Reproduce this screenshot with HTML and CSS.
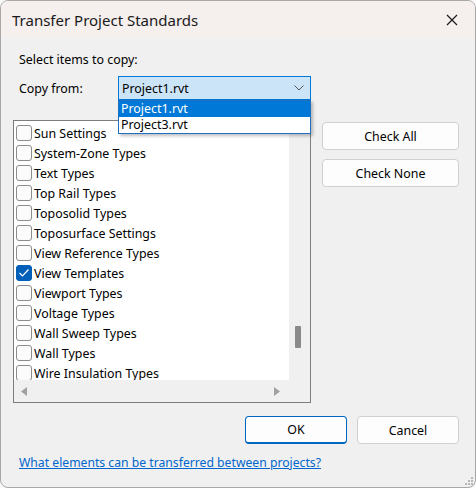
FILE: index.html
```html
<!DOCTYPE html>
<html>
<head>
    <title>Transfer Project Standards</title>
    <meta charset="utf-8" />
    <link rel="stylesheet" href="styles.css">
</head>
<body>
    <div class="window">
        <div class="titlebar">
            <span class="title">Transfer Project Standards</span>
            <svg class="close" width="12" height="12" viewBox="0 0 12 12">
                <path d="M1 1 L11 11 M11 1 L1 11" stroke="#1a1a1a" stroke-width="1.2" fill="none"/>
            </svg>
        </div>
        <div class="content">
            <div class="caption">Select items to copy:</div>
            <div class="copy-row">
                <span class="label">Copy from:</span>
                <div class="combo">
                    <span>Project1.rvt</span>
                    <svg width="10" height="6" viewBox="0 0 10 6">
                        <path d="M0.5 0.5 L5 5 L9.5 0.5" stroke="#555" stroke-width="1" fill="none"/>
                    </svg>
                    <div class="popup">
                        <div class="opt selected">Project1.rvt</div>
                        <div class="opt">Project3.rvt</div>
                    </div>
                </div>
            </div>
            <div class="middle">
                <div class="listbox">
                    <div class="items">
                        <div class="item"><span class="box"></span>Sun Settings</div>
                        <div class="item"><span class="box"></span>System-Zone Types</div>
                        <div class="item"><span class="box"></span>Text Types</div>
                        <div class="item"><span class="box"></span>Top Rail Types</div>
                        <div class="item"><span class="box"></span>Toposolid Types</div>
                        <div class="item"><span class="box"></span>Toposurface Settings</div>
                        <div class="item"><span class="box"></span>View Reference Types</div>
                        <div class="item"><span class="box checked"><svg width="12" height="10" viewBox="0 0 12 10"><path d="M1.5 5 L4.5 8 L10.5 1.5" stroke="#fff" stroke-width="1.2" fill="none"/></svg></span>View Templates</div>
                        <div class="item"><span class="box"></span>Viewport Types</div>
                        <div class="item"><span class="box"></span>Voltage Types</div>
                        <div class="item"><span class="box"></span>Wall Sweep Types</div>
                        <div class="item"><span class="box"></span>Wall Types</div>
                        <div class="item"><span class="box"></span>Wire Insulation Types</div>
                    </div>
                    <div class="vscroll"><div class="thumb"></div></div>
                    <div class="hscroll">
                        <svg width="6" height="9" viewBox="0 0 6 9"><path d="M6 0 L0 4.5 L6 9 Z" fill="#a0a0a0"/></svg>
                        <svg width="6" height="9" viewBox="0 0 6 9"><path d="M0 0 L6 4.5 L0 9 Z" fill="#a0a0a0"/></svg>
                    </div>
                    <div class="corner"></div>
                </div>
                <div class="side-buttons">
                    <button class="btn">Check All</button>
                    <button class="btn">Check None</button>
                </div>
            </div>
            <div class="actions">
                <button class="btn default">OK</button>
                <button class="btn">Cancel</button>
            </div>
            <a class="help" href="#">What elements can be transferred between projects?</a>
        </div>
        <svg class="grip" width="10" height="10" viewBox="0 0 10 10">
            <rect x="7" y="1" width="2" height="2" fill="#b8b8b8"/>
            <rect x="4" y="4" width="2" height="2" fill="#b8b8b8"/>
            <rect x="7" y="4" width="2" height="2" fill="#b8b8b8"/>
            <rect x="1" y="7" width="2" height="2" fill="#b8b8b8"/>
            <rect x="4" y="7" width="2" height="2" fill="#b8b8b8"/>
            <rect x="7" y="7" width="2" height="2" fill="#b8b8b8"/>
        </svg>
    </div>
</body>
</html>
```

FILE: styles.css
```css
html, body {
    margin: 0;
    background: #fafafa;
}

body {
    font-family: "Noto Sans", "Liberation Sans", sans-serif;
    font-size: 12.4px;
    color: #000;
}

.window {
    position: relative;
    box-sizing: border-box;
    width: 476px;
    height: 488px;
    border: 1px solid #a8a8a8;
    border-radius: 8px;
    background: #f0f0f0;
    overflow: hidden;
}

.titlebar {
    height: 37px;
    background: #f5efee;
    display: flex;
    align-items: center;
    justify-content: space-between;
    padding: 0 17px 0 11px;
}

.title {
    font-size: 15px;
    color: #1a1a1a;
}

.content {
    padding: 12px 16px 0 12px;
}

.caption {
    padding-left: 6px;
    height: 20px;
    line-height: 20px;
}

.copy-row {
    display: flex;
    align-items: center;
    margin-top: 6px;
}

.label {
    width: 99px;
    padding-left: 6px;
}

.combo {
    position: relative;
    box-sizing: border-box;
    width: 193px;
    height: 24px;
    background: #cce4f7;
    border: 1px solid #0078d7;
    display: flex;
    align-items: center;
    justify-content: space-between;
    padding: 0 6px 0 3px;
}

.popup {
    position: absolute;
    left: -1px;
    top: 23px;
    width: 193px;
    box-sizing: border-box;
    border: 1px solid #1f6fc0;
    background: #fff;
    box-shadow: 2px 2px 3px rgba(0, 0, 0, 0.25);
    z-index: 2;
}

.opt {
    height: 16px;
    line-height: 16px;
    padding-left: 2px;
}

.opt.selected {
    background: #0078d7;
    color: #fff;
}

.middle {
    display: flex;
    margin-top: 20px;
    gap: 11px;
}

.listbox {
    box-sizing: border-box;
    width: 298px;
    height: 283px;
    border: 1px solid #7d7d7d;
    display: grid;
    grid-template-columns: 1fr 21px;
    grid-template-rows: 1fr 22px;
    background: #f0f0f0;
}

.items {
    background: #fff;
    overflow: hidden;
    padding-top: 2px;
}

.item {
    height: 20px;
    display: flex;
    align-items: center;
    padding-left: 2px;
    white-space: nowrap;
}

.box {
    box-sizing: border-box;
    width: 16px;
    height: 16px;
    border: 1px solid #8c8c8c;
    border-radius: 3px;
    background: #fbfbfb;
    margin-right: 2px;
    display: flex;
    align-items: center;
    justify-content: center;
}

.box.checked {
    background: #005fb8;
    border-color: #005fb8;
}

.vscroll {
    position: relative;
}

.thumb {
    position: absolute;
    left: 6px;
    top: 205px;
    width: 6px;
    height: 22px;
    background: #8a8a8a;
    border-radius: 1px;
}

.hscroll {
    display: flex;
    align-items: center;
    justify-content: space-between;
    padding: 0 9px 0 7px;
}

.side-buttons {
    display: flex;
    flex-direction: column;
    gap: 9px;
    margin-top: 2px;
}

.btn {
    box-sizing: border-box;
    width: 137px;
    height: 28px;
    background: #fdfdfd;
    border: 1px solid #d0d0d0;
    border-radius: 4px;
    font-family: inherit;
    font-size: 12.4px;
    color: #000;
    padding: 0;
}

.actions {
    display: flex;
    justify-content: flex-end;
    gap: 10px;
    margin-top: 13px;
}

.actions .btn {
    width: 102px;
}

.btn.default {
    border: 1px solid #0067c0;
    border-bottom-width: 2px;
}

.help {
    display: inline-block;
    margin: 10px 0 0 6px;
    color: #0066cc;
    text-decoration: underline;
    font-size: 12.2px;
}

.grip {
    position: absolute;
    right: 1px;
    bottom: 1px;
}
```
